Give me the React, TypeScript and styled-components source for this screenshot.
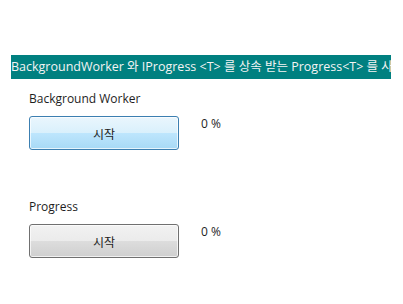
import React from "react";
import styled, { createGlobalStyle } from "styled-components";

const FONT = `"Open Sans", "Noto Sans CJK KR", sans-serif`;

const Global = createGlobalStyle`
  html, body { margin: 0; padding: 0; background: #ffffff; }
  body { font-family: ${FONT}; font-size: 12px; color: #1e1e1e; }
`;

const Page = styled.div`
  padding: 55px 0 0 11px;
  width: 403px;
  height: 304px;
  box-sizing: border-box;
  overflow: hidden;
`;

const Header = styled.div`
  width: 380px;
  height: 24px;
  line-height: 24px;
  background: #008080;
  color: #f4f4f4;
  font-size: 12.5px;
  white-space: nowrap;
  overflow: hidden;
`;

const Section = styled.div<{ $top: number }>`
  margin-top: ${(p) => p.$top}px;
  padding-left: 18px;
  display: flex;
  flex-direction: column;
  gap: 9px;
`;

const Label = styled.div`
  line-height: 16px;
  height: 16px;
  font-size: 12px;
  color: #1e1e1e;
`;

const Row = styled.div`
  display: flex;
  align-items: flex-start;
  gap: 22px;
`;

const Button = styled.button<{ $variant: "blue" | "grey" }>`
  width: 150px;
  height: 34px;
  box-sizing: border-box;
  border-radius: 3px;
  border: 1px solid ${(p) => (p.$variant === "blue" ? "#3c7fb1" : "#707070")};
  background: ${(p) =>
    p.$variant === "blue"
      ? "linear-gradient(to bottom, #eaf6fd 0%, #d9f0fc 50%, #bee6fd 50%, #a7d9f5 100%)"
      : "linear-gradient(to bottom, #f2f2f2 0%, #ebebeb 50%, #dddddd 50%, #cfcfcf 100%)"};
  box-shadow: inset 0 0 0 1px rgba(255, 255, 255, 0.7);
  font-family: ${FONT};
  font-size: 12px;
  color: #1e1e1e;
  padding: 2px 0 0;
  cursor: default;
`;

const Percent = styled.div`
  line-height: 16px;
  margin-top: 0;
  font-size: 12px;
  color: #1e1e1e;
`;

export default function App() {
  return (
    <>
      <Global />
      <Page>
        <Header>BackgroundWorker 와 IProgress &lt;T&gt; 를 상속 받는 Progress&lt;T&gt; 를 사용한 예제</Header>
        <Section $top={12}>
          <Label>Background Worker</Label>
          <Row>
            <Button $variant="blue">시작</Button>
            <Percent>0 %</Percent>
          </Row>
        </Section>
        <Section $top={49}>
          <Label>Progress</Label>
          <Row>
            <Button $variant="grey">시작</Button>
            <Percent>0 %</Percent>
          </Row>
        </Section>
      </Page>
    </>
  );
}
